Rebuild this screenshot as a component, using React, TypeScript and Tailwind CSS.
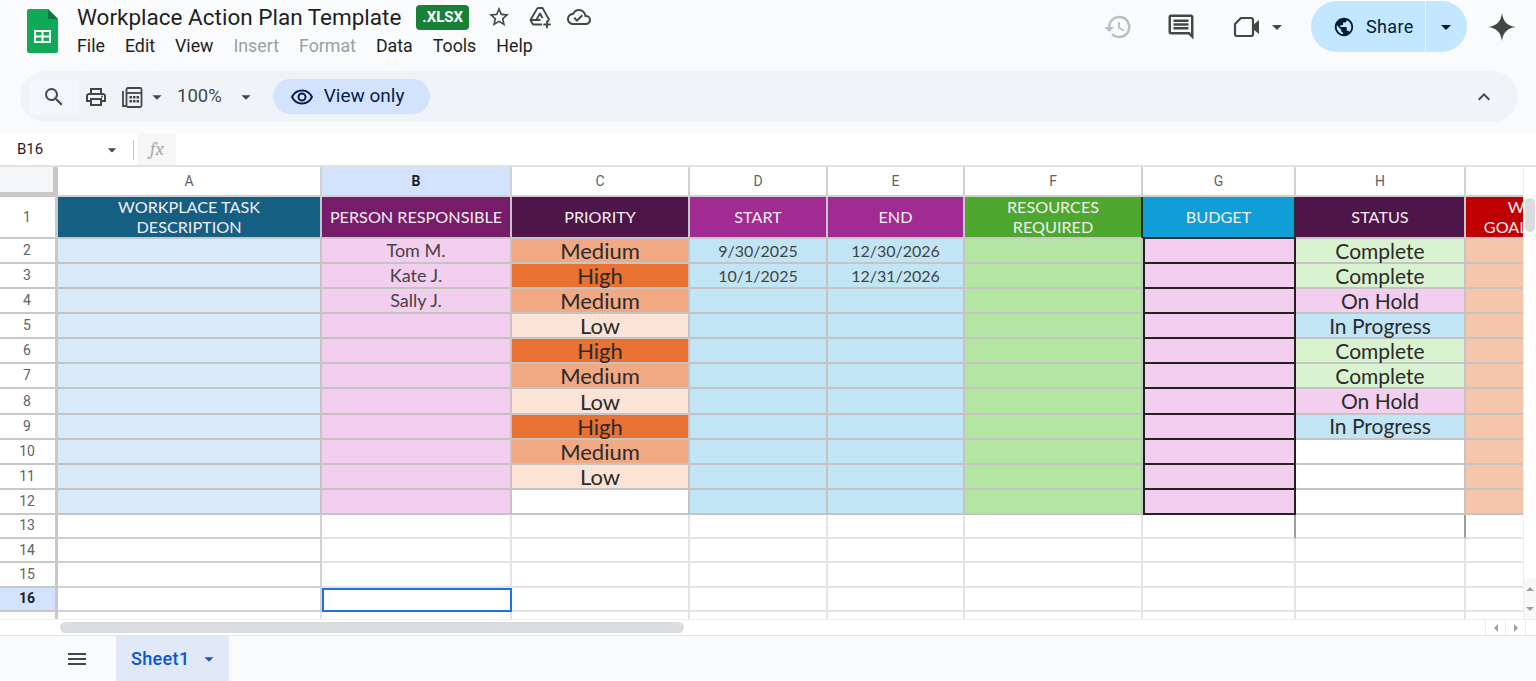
import {
  MdArrowDropDown,
  MdExpandLess,
  MdHistory,
  MdMenu,
  MdOutlineCloudDone,
  MdOutlineComment,
  MdOutlinePrint,
  MdOutlineRemoveRedEye,
  MdOutlineStarBorder,
  MdPublic,
  MdSearch,
} from 'react-icons/md';

const ui = { fontFamily: 'Roboto, "Open Sans", sans-serif' };
const sheetFont = { fontFamily: 'Lato, "Open Sans", sans-serif' };

const menus = [
  { label: 'File' },
  { label: 'Edit' },
  { label: 'View' },
  { label: 'Insert', off: true },
  { label: 'Format', off: true },
  { label: 'Data' },
  { label: 'Tools' },
  { label: 'Help' },
];

const priority: Record<string, string> = {
  Medium: 'bg-[#f1a983]',
  High: 'bg-[#e97132]',
  Low: 'bg-[#fbe3d6]',
};

const status: Record<string, string> = {
  Complete: 'bg-[#d9f2d0]',
  'On Hold': 'bg-[#f2ceef]',
  'In Progress': 'bg-[#c1e5f5]',
};

const rows = [
  { n: 2, person: 'Tom M.', pri: 'Medium', start: '9/30/2025', end: '12/30/2026', st: 'Complete' },
  { n: 3, person: 'Kate J.', pri: 'High', start: '10/1/2025', end: '12/31/2026', st: 'Complete' },
  { n: 4, person: 'Sally J.', pri: 'Medium', st: 'On Hold' },
  { n: 5, pri: 'Low', st: 'In Progress' },
  { n: 6, pri: 'High', st: 'Complete' },
  { n: 7, pri: 'Medium', st: 'Complete' },
  { n: 8, pri: 'Low', st: 'On Hold' },
  { n: 9, pri: 'High', st: 'In Progress' },
  { n: 10, pri: 'Medium' },
  { n: 11, pri: 'Low' },
  { n: 12 },
];

const columnLetters = ['A', 'B', 'C', 'D', 'E', 'F', 'G', 'H', ''];

function SheetsLogo() {
  return (
    <svg width="31" height="44" viewBox="0 0 31 44" className="ml-[27px] shrink-0">
      <path d="M2 0h19l10 10v32a2 2 0 0 1-2 2H2a2 2 0 0 1-2-2V2a2 2 0 0 1 2-2z" fill="#0fa958" />
      <path d="M21 0l10 10H21z" fill="#0b7a3e" />
      <path d="M7 21h17v13H7z" fill="#fff" />
      <path d="M9 23h5.500v3.500H9zM16.500 23H22v3.500h-5.500zM9 28.500h5.500V32H9zM16.500 28.500H22V32h-5.500z" fill="#0fa958" />
    </svg>
  );
}

function Spark() {
  return (
    <svg width="28" height="28" viewBox="0 0 28 28">
      <path d="M14 0c1 8 5 13 14 14-9 1-13 6-14 14-1-8-5-13-14-14 9-1 13-6 14-14z" fill="#444746" />
    </svg>
  );
}

function DriveAdd({ className }: { className?: string }) {
  return (
    <svg viewBox="0 0 24 24" width="24" height="24" fill="none" stroke="#444746" strokeWidth="1.800" strokeLinejoin="round" className={className}>
      <path d="M9.500 3h5l6.500 11.500-1.500 2.500" />
      <path d="M9.500 3L2.500 15l2.500 4.500h9" />
      <path d="M8.500 14.500L12 8.500l2.500 4.500M2.500 15h10" />
      <path d="M19 16.500v6M16 19.500h6" strokeLinecap="round" />
    </svg>
  );
}

function Camera({ className }: { className?: string }) {
  return (
    <svg viewBox="0 0 28 24" width="28" height="24" fill="none" className={className}>
      <path d="M8 3h10a2 2 0 0 1 2 2v14a2 2 0 0 1-2 2H4a2 2 0 0 1-2-2V9z" stroke="#444746" strokeWidth="2.200" strokeLinejoin="round" />
      <path d="M20 10l6-5v14l-6-5z" fill="#444746" />
    </svg>
  );
}

function CalcSheet({ className }: { className?: string }) {
  return (
    <svg viewBox="0 0 24 24" width="24" height="24" fill="none" className={className}>
      <path d="M3 6v15h3" stroke="#444746" strokeWidth="1.800" />
      <rect x="6.500" y="3" width="15" height="19" rx="1.500" stroke="#444746" strokeWidth="1.800" />
      <path d="M7 8h14" stroke="#444746" strokeWidth="1.800" />
      <path d="M9.500 11h2.500v2.500H9.500zM13 11h2.500v2.500H13zM16.500 11H19v2.500h-2.500zM9.500 15h2.500v2.500H9.500zM13 15h2.500v2.500H13zM16.500 15H19v2.500h-2.500z" fill="#444746" />
    </svg>
  );
}

function Header({ text, bg, tone }: { text: string[]; bg: string; tone?: string }) {
  return (
    <div
      className={`flex flex-col items-center justify-center border-r-2 border-b-2 text-[16.200px] leading-[20px] text-[#f3eef3] ${bg} ${tone ?? 'border-[#c6c6c6]'}`}
    >
      {text.map((t) => (
        <span key={t} className="whitespace-nowrap">{t}</span>
      ))}
    </div>
  );
}

function Cell({ bg, children, size, black }: { bg?: string; children?: string; size?: string; black?: boolean }) {
  return (
    <div
      className={`flex items-center justify-center border-r-2 border-b-2 whitespace-nowrap ${bg ?? 'bg-white'} ${black ? 'border-l-2 border-[#222222]' : 'border-[#c4c4c4]'} ${size ?? 'text-[16px] text-[#444444]'}`}
    >
      {children}
    </div>
  );
}

function Blank({ tone }: { tone?: string }) {
  return <div className={`border-r-2 border-b-2 bg-white ${tone ?? 'border-[#e4e4e4]'}`} />;
}

function RowNum({ n, active }: { n: number; active?: boolean }) {
  return (
    <div
      className={`flex items-center justify-center border-r-[3px] border-b-2 border-[#c8c8c8] pr-[1px] text-[14px] ${active ? 'bg-[#d3e3fd] font-bold text-[#1f1f1f]' : 'bg-white text-[#5f6368]'}`}
      style={ui}
    >
      {n}
    </div>
  );
}

export default function App() {
  return (
    <div className="flex h-[681px] w-[1536px] flex-col overflow-hidden bg-white" style={ui}>
      {/* Title bar */}
      <div className="flex h-[71px] shrink-0 items-start bg-[#f9fbfd] pt-[9px]">
        <SheetsLogo />
        <div className="mt-[-4px] ml-[19px] flex flex-col">
          <div className="flex h-[24px] items-center">
            <span className="text-[22.500px] leading-none text-[#1f1f1f]">Workplace Action Plan Template</span>
            <span className="ml-[15px] rounded-[4px] bg-[#188038] px-[6px] py-[4px] text-[15px] leading-[17px] font-bold text-white">.XLSX</span>
            <MdOutlineStarBorder className="ml-[18px] text-[24px] text-[#444746]" />
            <DriveAdd className="ml-[17px]" />
            <MdOutlineCloudDone className="ml-[15px] text-[24px] text-[#444746]" />
          </div>
          <div className="mt-[5px] flex gap-[20px] text-[17.800px] leading-[24px] text-[#1f1f1f]">
            {menus.map((m) => (
              <span key={m.label} className={m.off ? 'text-[#9aa0a6]' : ''}>{m.label}</span>
            ))}
          </div>
        </div>
        <div className="mt-[-8px] ml-auto flex h-[51px] items-center pr-[20px]">
          <MdHistory className="text-[30px] text-[#bdbfc1]" />
          <MdOutlineComment className="ml-[33px] text-[30px] text-[#444746]" />
          <Camera className="ml-[37px]" />
          <MdArrowDropDown className="ml-[4px] text-[24px] text-[#444746]" />
          <div className="ml-[22px] flex h-[51px] w-[156px] items-center rounded-full bg-[#c2e7ff]">
            <div className="flex h-full w-[115px] items-center border-r border-[#e6f4ff] pl-[22px]">
              <MdPublic className="text-[22px] text-[#001d35]" />
              <span className="ml-[11px] text-[18px] tracking-[0.02em] text-[#001d35]">Share</span>
            </div>
            <MdArrowDropDown className="ml-[8px] text-[24px] text-[#001d35]" />
          </div>
          <div className="ml-[21px]"><Spark /></div>
        </div>
      </div>

      {/* Toolbar */}
      <div className="h-[63px] shrink-0 bg-[#f9fbfd] pr-[18px] pl-[20px]">
        <div className="flex h-[51px] items-center rounded-full bg-[#f0f4f9] pr-[22px] pl-[9px]">
          <div className="flex h-[36px] w-[50px] items-center justify-center bg-[#f3f6fb]">
            <MdSearch className="text-[24px] text-[#444746]" />
          </div>
          <MdOutlinePrint className="ml-[5px] text-[24px] text-[#444746]" />
          <CalcSheet className="ml-[12px]" />
          <MdArrowDropDown className="ml-[2px] text-[22px] text-[#444746]" />
          <span className="ml-[9px] text-[18.500px] text-[#444746]">100%</span>
          <MdArrowDropDown className="ml-[13px] text-[22px] text-[#444746]" />
          <div className="ml-[16px] flex h-[35px] w-[157px] items-center rounded-full bg-[#d3e3fd] pl-[17px]">
            <MdOutlineRemoveRedEye className="text-[24px] text-[#041e49]" />
            <span className="ml-[10px] text-[19px] text-[#041e49]">View only</span>
          </div>
          <MdExpandLess className="ml-auto text-[24px] text-[#444746]" />
        </div>
      </div>

      {/* Formula bar */}
      <div className="flex h-[33px] shrink-0 items-center border-b-2 border-[#e2e2e2] bg-white">
        <span className="ml-[17px] w-[85px] text-[15px] text-[#1f1f1f]">B16</span>
        <MdArrowDropDown className="text-[20px] text-[#444746]" />
        <div className="ml-[11px] h-[20px] w-px bg-[#c7c7c7]" />
        <div className="ml-[4px] flex h-full w-[38px] items-center justify-center bg-[#f7f7f7] font-serif text-[19px] text-[#aaaaaa] italic">fx</div>
      </div>

      {/* Grid */}
      <div className="flex h-[452px] shrink-0">
        <div className="w-[1523px] overflow-hidden">
          <div
            className="grid w-[1585px] grid-cols-[58px_264px_190px_178px_138px_137px_178px_153px_170px_119px] grid-rows-[30px_42px_repeat(11,25.090px)_repeat(4,24.250px)_7px]"
            style={sheetFont}
          >
            <div className="border-r-[5px] border-b-[5px] border-[#c8c8c8] bg-[#f5f6f7]" />
            {columnLetters.map((c, i) => (
              <div
                key={i}
                className={`flex items-center justify-center border-r-2 border-b-2 border-[#d0d0d0] text-[14px] ${c === 'B' ? 'bg-[#d3e3fd] font-bold text-[#1f1f1f]' : 'bg-white text-[#5f6368]'}`}
                style={ui}
              >
                {c}
              </div>
            ))}

            <RowNum n={1} />
            <Header text={['WORKPLACE TASK', 'DESCRIPTION']} bg="bg-[#156082]" />
            <Header text={['PERSON RESPONSIBLE']} bg="bg-[#771c68]" />
            <Header text={['PRIORITY']} bg="bg-[#4e1548]" />
            <Header text={['START']} bg="bg-[#a02b93]" />
            <Header text={['END']} bg="bg-[#a02b93]" />
            <Header text={['RESOURCES', 'REQUIRED']} bg="bg-[#4ea72e]" tone="border-r-[#2b2b2b] border-b-[#c6c6c6]" />
            <Header text={['BUDGET']} bg="bg-[#0f9ed5]" tone="border-[#2b2b2b]" />
            <Header text={['STATUS']} bg="bg-[#4e1548]" />
            <Header text={['WIN', 'GOAL MET']} bg="bg-[#c00000]" />

            {rows.map((r) => (
              <div key={r.n} className="contents">
                <RowNum n={r.n} />
                <Cell bg="bg-[#dae9f8]" />
                <Cell bg="bg-[#f2ceef]" size="text-[18px] text-[#444444]">{r.person}</Cell>
                <Cell size="text-[22px] text-[#2b2b2b]" bg={r.pri ? priority[r.pri] : undefined}>{r.pri}</Cell>
                <Cell bg="bg-[#c1e5f5]">{r.start}</Cell>
                <Cell bg="bg-[#c1e5f5]">{r.end}</Cell>
                <Cell bg="bg-[#b4e5a2]" />
                <Cell black bg="bg-[#f2ceef]" />
                <Cell size="text-[21px] text-[#2b2b2b]" bg={r.st ? status[r.st] : undefined}>{r.st}</Cell>
                <Cell bg="bg-[#f6c6ac]" />
              </div>
            ))}

            {[13, 14, 15, 16].map((n) => (
              <div key={n} className="contents">
                <RowNum n={n} active={n === 16} />
                <Blank tone="border-[#d2d2d2]" />
                {n === 16 ? (
                  <div className="border-2 border-[#1a73e8] bg-white" />
                ) : (
                  <Blank />
                )}
                <Blank />
                <Blank />
                <Blank />
                <Blank />
                <Blank tone={n === 13 ? 'border-r-[#9e9e9e] border-b-[#e4e4e4]' : undefined} />
                <Blank tone={n === 13 ? 'border-r-[#9e9e9e] border-b-[#e4e4e4]' : undefined} />
                <Blank />
              </div>
            ))}

            <div className="border-r-[3px] border-[#c8c8c8] bg-white" />
            {[0, 1, 2, 3, 4, 5, 6, 7, 8].map((i) => (
              <div key={i} className="border-r-2 border-[#e4e4e4] bg-white" />
            ))}
          </div>
        </div>

        {/* Vertical scrollbar */}
        <div className="flex w-[13px] flex-col items-center border-l border-[#eeeeee] bg-white pt-[31px]">
          <div className="h-[34px] w-[10px] rounded-full bg-[#dadce0]" />
          <div className="mt-auto flex h-[40px] w-full flex-col items-center justify-around bg-[#f8f8f8]">
            <div className="h-0 w-0 border-x-[4px] border-b-[4px] border-x-transparent border-b-[#a0a0a0]" />
            <div className="h-0 w-0 border-x-[4px] border-t-[4px] border-x-transparent border-t-[#a0a0a0]" />
          </div>
        </div>
      </div>

      {/* Horizontal scrollbar */}
      <div className="flex h-[16px] shrink-0 items-center border-t border-[#eeeeee] bg-white">
        <div className="ml-[60px] h-[11px] w-[624px] rounded-full bg-[#dadce0]" />
        <div className="ml-auto flex h-full w-[51px]">
          <div className="flex w-[20px] items-center justify-center border-l border-[#eeeeee]">
            <div className="h-0 w-0 border-y-[4px] border-r-[4px] border-y-transparent border-r-[#a0a0a0]" />
          </div>
          <div className="flex w-[20px] items-center justify-center border-l border-[#eeeeee]">
            <div className="h-0 w-0 border-y-[4px] border-l-[4px] border-y-transparent border-l-[#a0a0a0]" />
          </div>
          <div className="flex-1 border-l border-[#eeeeee]" />
        </div>
      </div>

      {/* Sheet tabs */}
      <div className="flex h-[46px] shrink-0 items-stretch border-t border-[#e3e5e8] bg-[#f9fbfd]">
        <div className="flex w-[116px] items-center pl-[65px]">
          <MdMenu className="text-[24px] text-[#444746]" />
        </div>
        <div className="flex w-[113px] items-center bg-[#e1e9f7] pl-[15px]">
          <span className="text-[18px] font-medium tracking-[0.02em] text-[#0b57d0]">Sheet1</span>
          <MdArrowDropDown className="ml-[8px] text-[22px] text-[#0b57d0]" />
        </div>
      </div>
    </div>
  );
}
